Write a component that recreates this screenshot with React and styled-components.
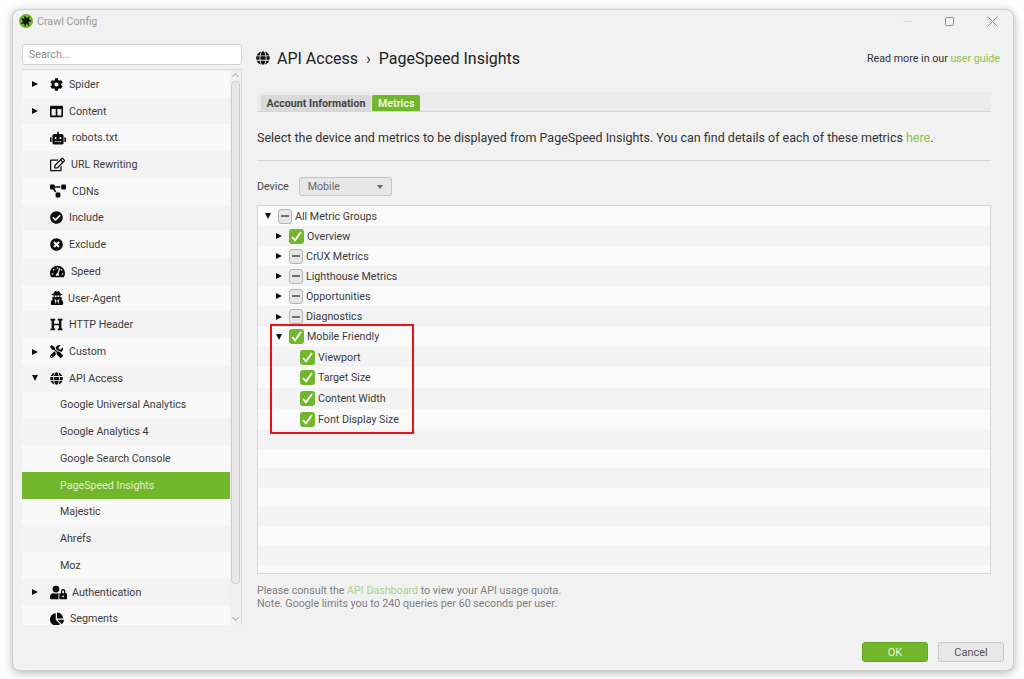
import React from "react";
import styled, { createGlobalStyle } from "styled-components";
import {
  FaCog, FaColumns, FaRobot, FaRegEdit, FaProjectDiagram, FaCheckCircle, FaTimesCircle,
  FaTachometerAlt, FaUserSecret, FaHeading, FaTools, FaGlobe, FaUserLock, FaChartPie,
} from "react-icons/fa";

const GREEN = "#72b62b";

const navItems = [
  { label: "Spider", icon: FaCog, size: 13, arrow: "right", gap: 6 },
  { label: "Content", icon: FaColumns, size: 13, arrow: "right", gap: 6 },
  { label: "robots.txt", icon: FaRobot, size: 16, gap: 9 },
  { label: "URL Rewriting", icon: FaRegEdit, size: 15, gap: 8 },
  { label: "CDNs", icon: FaProjectDiagram, size: 16, gap: 9 },
  { label: "Include", icon: FaCheckCircle, size: 13, gap: 6 },
  { label: "Exclude", icon: FaTimesCircle, size: 13, gap: 6 },
  { label: "Speed", icon: FaTachometerAlt, size: 15, gap: 8 },
  { label: "User-Agent", icon: FaUserSecret, size: 14, gap: 5 },
  { label: "HTTP Header", icon: FaHeading, size: 13, gap: 6 },
  { label: "Custom", icon: FaTools, size: 13, arrow: "right", gap: 6 },
  { label: "API Access", icon: FaGlobe, size: 13, arrow: "down", gap: 6 },
  { label: "Google Universal Analytics", child: true },
  { label: "Google Analytics 4", child: true },
  { label: "Google Search Console", child: true },
  { label: "PageSpeed Insights", child: true, active: true },
  { label: "Majestic", child: true },
  { label: "Ahrefs", child: true },
  { label: "Moz", child: true },
  { label: "Authentication", icon: FaUserLock, size: 17, arrow: "right", gap: 9 },
  { label: "Segments", icon: FaChartPie, size: 14, gap: 7 },
];

const metricRows = [
  { label: "All Metric Groups", level: 0, arrow: "down", check: "mixed" },
  { label: "Overview", level: 1, arrow: "right", check: "on" },
  { label: "CrUX Metrics", level: 1, arrow: "right", check: "mixed" },
  { label: "Lighthouse Metrics", level: 1, arrow: "right", check: "mixed" },
  { label: "Opportunities", level: 1, arrow: "right", check: "mixed" },
  { label: "Diagnostics", level: 1, arrow: "right", check: "mixed" },
  { label: "Mobile Friendly", level: 1, arrow: "down", check: "on" },
  { label: "Viewport", level: 2, check: "on" },
  { label: "Target Size", level: 2, check: "on" },
  { label: "Content Width", level: 2, check: "on" },
  { label: "Font Display Size", level: 2, check: "on" },
  {}, {}, {}, {}, {}, {}, {}, {},
];

function Logo() {
  return (
    <svg width="14" height="14" viewBox="0 0 14 14">
      <circle cx="7" cy="7" r="7" fill="#72b62b" />
      <path d="M2 4 L5.5 5 L5 1.5 L8 4.2 L10.5 2 L10 5.5 L13 7 L9.4 8 L10.5 12.5 L7.6 9.6 L6 13 L5 9.4 L1.5 10 L4 7.4 Z" fill="#10180a" />
    </svg>
  );
}

function Arrow({ dir }) {
  return <ArrowMark $dir={dir} />;
}

function Check({ state }) {
  if (state === "on") {
    return (
      <CheckBox $on>
        <svg width="15" height="15" viewBox="0 0 15 15">
          <path d="M3 8 L6 11.3 L12 3" fill="none" stroke="#fff" strokeWidth="1.8" />
        </svg>
      </CheckBox>
    );
  }
  return (
    <CheckBox>
      <Dash />
    </CheckBox>
  );
}

export default function App() {
  return (
    <>
      <GlobalStyle />
      <Window>
        <TitleBar>
          <TitleLeft>
            <Logo />
            <TitleText>Crawl Config</TitleText>
          </TitleLeft>
          <WindowButtons>
            <MinButton />
            <MaxButton />
            <svg width="11" height="11" viewBox="0 0 11 11">
              <path d="M0.5 0.5 L10.5 10.5 M10.5 0.5 L0.5 10.5" stroke="#8a8a8a" strokeWidth="1" />
            </svg>
          </WindowButtons>
        </TitleBar>
        <Body>
          <Sidebar>
            <SearchBox placeholder="Search..." readOnly />
            <NavTree>
              <NavList>
                {navItems.map((item) => (
                  <NavRow key={item.label} $active={item.active} $child={item.child}>
                    <ArrowSlot>{item.arrow && <Arrow dir={item.arrow} />}</ArrowSlot>
                    {item.icon && (
                      <NavIcon>
                        <item.icon size={item.size} />
                      </NavIcon>
                    )}
                    <NavLabel $gap={item.gap}>{item.label}</NavLabel>
                  </NavRow>
                ))}
              </NavList>
              <ScrollBar>
                <ScrollChevron $up />
                <ScrollThumb />
                <ScrollChevron />
              </ScrollBar>
            </NavTree>
          </Sidebar>
          <Main>
            <Header>
              <HeaderTitle>
                <FaGlobe size={14} />
                <Crumb>API Access</Crumb>
                <CrumbSep>›</CrumbSep>
                <Crumb>PageSpeed Insights</Crumb>
              </HeaderTitle>
              <GuideText>
                Read more in our <GreenLink>user guide</GreenLink>
              </GuideText>
            </Header>
            <TabStrip>
              <Tab>Account Information</Tab>
              <Tab $active>Metrics</Tab>
            </TabStrip>
            <Intro>
              Select the device and metrics to be displayed from PageSpeed Insights. You can find details of each of these metrics <GreenLink>here</GreenLink>.
            </Intro>
            <Divider />
            <DeviceRow>
              <DeviceLabel>Device</DeviceLabel>
              <Select>
                Mobile
                <SelectCaret />
              </Select>
            </DeviceRow>
            <MetricTree>
              {metricRows.map((row, i) => (
                <MetricRow key={i} $level={row.level}>
                  {row.label && (
                    <>
                      <MetricArrow>{row.arrow && <Arrow dir={row.arrow} />}</MetricArrow>
                      <Check state={row.check} />
                      <MetricLabel>{row.label}</MetricLabel>
                    </>
                  )}
                </MetricRow>
              ))}
              <Highlight />
            </MetricTree>
            <Notes>
              <div>
                Please consult the <NoteLink>API Dashboard</NoteLink> to view your API usage quota.
              </div>
              <div>Note. Google limits you to 240 queries per 60 seconds per user.</div>
            </Notes>
          </Main>
        </Body>
        <Footer>
          <OkButton>OK</OkButton>
          <CancelButton>Cancel</CancelButton>
        </Footer>
      </Window>
    </>
  );
}

const GlobalStyle = createGlobalStyle`
  html, body {
    margin: 0;
    height: 100%;
    background: #fdfdfd;
    overflow: hidden;
  }
  body {
    padding: 9px 10px 8px 12px;
    box-sizing: border-box;
    font-family: Roboto, sans-serif;
  }
  #root {
    height: 100%;
  }
  * {
    box-sizing: border-box;
  }
`;

const Window = styled.div`
  height: 100%;
  display: flex;
  flex-direction: column;
  background: #f1f1f1;
  border: 1px solid #cfcfcf;
  border-radius: 8px;
  box-shadow: 0 2px 9px rgba(0, 0, 0, 0.28);
  overflow: hidden;
`;

const TitleBar = styled.div`
  height: 26px;
  flex: none;
  display: flex;
  align-items: center;
  justify-content: space-between;
  padding: 0 15px 4px 6px;
`;

const TitleLeft = styled.div`
  display: flex;
  align-items: center;
  gap: 4px;
`;

const TitleText = styled.span`
  font-size: 10.7px;
  color: #9a9a9a;
`;

const WindowButtons = styled.div`
  display: flex;
  align-items: center;
  gap: 33px;
`;

const MinButton = styled.span`
  width: 9px;
  height: 1px;
  background: #dcdcdc;
`;

const MaxButton = styled.span`
  width: 9px;
  height: 9px;
  border: 1px solid #8a8a8a;
  border-radius: 1.5px;
`;

const Body = styled.div`
  flex: 1;
  display: flex;
  min-height: 0;
  padding-top: 8px;
`;

const Sidebar = styled.div`
  width: 220px;
  margin-left: 9px;
  flex: none;
  display: flex;
  flex-direction: column;
  gap: 4px;
`;

const SearchBox = styled.input`
  height: 21px;
  width: 100%;
  flex: none;
  padding: 0 6px;
  font: 400 10.7px Roboto, sans-serif;
  border: 1px solid #d2d2d2;
  border-radius: 3px;
  background: #fff;
  outline: none;
  &::placeholder {
    color: #8f8f8f;
  }
`;

const NavTree = styled.div`
  height: 556px;
  flex: none;
  display: flex;
  border-top: 1px solid #dcdcdc;
  border-right: 1px solid #dcdcdc;
  overflow: hidden;
`;

const NavList = styled.div`
  flex: 1;
  min-width: 0;
  padding-top: 1px;
  overflow: hidden;
`;

const NavRow = styled.div`
  height: 26.72px;
  display: flex;
  align-items: center;
  padding-left: ${(p) => (p.$child ? "10px" : "0")};
  background: ${(p) => (p.$active ? GREEN : "#f9f9f9")};
  color: ${(p) => (p.$active ? "#e0f0cc" : "#3c3c3c")};
  font-size: 10.7px;
  &:nth-child(even) {
    background: ${(p) => (p.$active ? GREEN : "#f3f3f3")};
  }
`;

const ArrowSlot = styled.span`
  width: 28px;
  flex: none;
  display: flex;
  padding-left: 10px;
  align-items: center;
`;

const NavIcon = styled.span`
  width: 13px;
  flex: none;
  display: flex;
  color: #0c0c0c;
  svg {
    flex: none;
  }
`;

const NavLabel = styled.span`
  margin-left: ${(p) => p.$gap || 0}px;
  white-space: nowrap;
`;

const ArrowMark = styled.span`
  width: 0;
  height: 0;
  border-style: solid;
  ${(p) =>
    p.$dir === "down"
      ? "border-width: 6px 3.5px 0 3.5px; border-color: #111 transparent transparent transparent;"
      : "border-width: 3.5px 0 3.5px 6px; border-color: transparent transparent transparent #111;"}
`;

const ScrollBar = styled.div`
  width: 11px;
  flex: none;
  display: flex;
  flex-direction: column;
  align-items: center;
  background: #f0f0f0;
`;

const ScrollChevron = styled.span`
  width: 5px;
  height: 5px;
  flex: none;
  margin: ${(p) => (p.$up ? "4px 0 0" : "auto 0 5px")};
  border-left: 1px solid #b5b5b5;
  border-top: 1px solid #b5b5b5;
  transform: rotate(${(p) => (p.$up ? "45deg" : "225deg")});
`;

const ScrollThumb = styled.div`
  width: 9px;
  height: 503px;
  margin-top: 2px;
  flex: none;
  background: #e9e9e9;
  border: 1px solid #cdcdcd;
  border-radius: 4px;
`;

const Main = styled.div`
  flex: 1;
  min-width: 0;
  display: flex;
  flex-direction: column;
  padding: 0 22px 0 15px;
`;

const Header = styled.div`
  height: 28px;
  flex: none;
  display: flex;
  align-items: center;
  justify-content: space-between;
  margin: 0 -9px 0 -1px;
`;

const HeaderTitle = styled.div`
  display: flex;
  align-items: center;
  color: #111;
  font-size: 16px;
  svg {
    margin-right: 7px;
  }
`;

const Crumb = styled.span`
  color: #222;
`;

const CrumbSep = styled.span`
  margin: 0 8px;
  color: #333;
`;

const GuideText = styled.div`
  font-size: 10.7px;
  color: #333;
`;

const GreenLink = styled.span`
  color: #8cc152;
`;

const TabStrip = styled.div`
  height: 20px;
  margin-top: 20px;
  flex: none;
  display: flex;
  gap: 1px;
  align-items: flex-end;
  padding-left: 4px;
  background: #ececec;
  border-bottom: 1px solid #d4d4d4;
`;

const Tab = styled.div`
  height: 16px;
  padding: 0 ${(p) => (p.$active ? "6px" : "5.5px")};
  display: flex;
  align-items: center;
  font-size: 10.7px;
  font-weight: 700;
  border-radius: 2px 2px 0 0;
  background: ${(p) => (p.$active ? GREEN : "#d9d9d9")};
  color: ${(p) => (p.$active ? "#eaf5dc" : "#444")};
`;

const Intro = styled.div`
  margin-top: 17px;
  font-size: 12.5px;
  line-height: 18px;
  color: #333;
  white-space: nowrap;
`;

const Divider = styled.div`
  height: 1px;
  margin-top: 13px;
  flex: none;
  background: #d6d6d6;
`;

const DeviceRow = styled.div`
  margin-top: 16px;
  height: 19px;
  flex: none;
  display: flex;
  align-items: center;
  gap: 10px;
`;

const DeviceLabel = styled.span`
  font-size: 10.7px;
  color: #444;
`;

const Select = styled.div`
  width: 93px;
  height: 19px;
  padding: 0 8px;
  display: flex;
  align-items: center;
  justify-content: space-between;
  font-size: 10.7px;
  color: #666;
  background: #e7e7e7;
  border: 1px solid #c4c4c4;
  border-radius: 3px;
`;

const SelectCaret = styled.span`
  width: 0;
  height: 0;
  border-style: solid;
  border-width: 4px 3.5px 0 3.5px;
  border-color: #666 transparent transparent transparent;
`;

const MetricTree = styled.div`
  position: relative;
  margin-top: 9px;
  height: 369px;
  flex: none;
  background: #fafafa;
  border: 1px solid #d9d9d9;
  overflow: hidden;
`;

const MetricRow = styled.div`
  height: ${(p) => (p.$level === undefined ? 19.4 : p.$level === 2 ? 20.7 : 20.1)}px;
  display: flex;
  align-items: center;
  padding-left: ${(p) => 7 + (p.$level || 0) * 11}px;
  background: #fafafa;
  &:nth-child(even) {
    background: #f3f3f3;
  }
`;

const MetricArrow = styled.span`
  width: 13px;
  flex: none;
  display: flex;
  align-items: center;
`;

const CheckBox = styled.span`
  width: ${(p) => (p.$on ? "15px" : "14px")};
  height: 15px;
  flex: none;
  display: flex;
  align-items: center;
  justify-content: center;
  border-radius: 3px;
  background: ${(p) => (p.$on ? GREEN : "#e6e6e6")};
  border: ${(p) => (p.$on ? "none" : "1px solid #b5b5b5")};
`;

const Dash = styled.span`
  width: 8px;
  height: 2px;
  background: #707070;
`;

const MetricLabel = styled.span`
  margin-left: 3px;
  font-size: 10.7px;
  color: #3c3c3c;
  white-space: nowrap;
`;

const Highlight = styled.div`
  position: absolute;
  left: 12px;
  top: 118px;
  width: 144px;
  height: 110px;
  border: 2px solid #ee1111;
  pointer-events: none;
`;

const Notes = styled.div`
  margin-top: 10px;
  font-size: 10.7px;
  line-height: 13px;
  color: #808080;
`;

const NoteLink = styled.span`
  color: #a9d18a;
`;

const Footer = styled.div`
  height: 39px;
  flex: none;
  display: flex;
  justify-content: flex-end;
  gap: 10px;
  padding: 11px 9px 0 0;
`;

const BaseButton = styled.div`
  width: 66px;
  height: 20px;
  display: flex;
  align-items: center;
  justify-content: center;
  font-size: 11px;
  border-radius: 3px;
`;

const OkButton = styled(BaseButton)`
  background: ${GREEN};
  border: 1px solid #67a526;
  color: #e6f3d6;
`;

const CancelButton = styled(BaseButton)`
  background: #e8e8e8;
  border: 1px solid #c6c6c6;
  color: #555;
`;
